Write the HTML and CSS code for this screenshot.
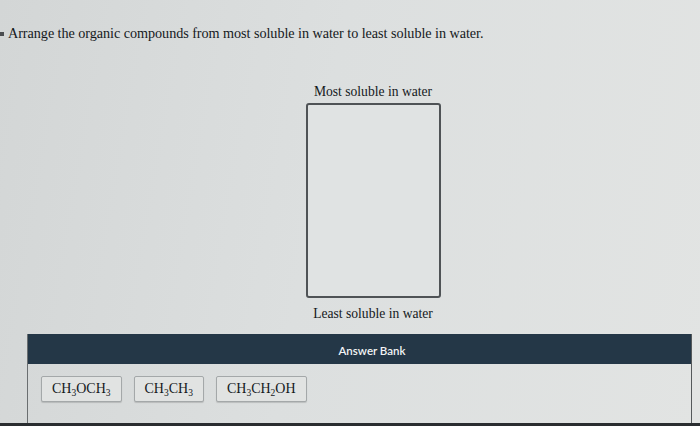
FILE: index.html
```html
<!DOCTYPE html>
<html lang="en">
<head>
    <meta charset="UTF-8">
    <meta name="viewport" content="width=device-width, initial-scale=1.0">
    <title>Solubility Ranking</title>
    <link rel="stylesheet" href="styles.css">
</head>
<body>
    <div class="question">
        <span class="marker"></span>
        <p class="prompt">Arrange the organic compounds from most soluble in water to least soluble in water.</p>
    </div>

    <div class="ranking">
        <div class="rank-label">Most soluble in water</div>
        <div class="drop-zone"></div>
        <div class="rank-label">Least soluble in water</div>
    </div>

    <div class="answer-bank">
        <div class="bank-header">Answer Bank</div>
        <div class="bank-items">
            <div class="tile">CH<sub>3</sub>OCH<sub>3</sub></div>
            <div class="tile">CH<sub>3</sub>CH<sub>3</sub></div>
            <div class="tile">CH<sub>3</sub>CH<sub>2</sub>OH</div>
        </div>
    </div>
    <div class="screen-edge"></div>
</body>
</html>
```

FILE: styles.css
```css
* {
    margin: 0;
    padding: 0;
    box-sizing: border-box;
}

html, body {
    height: 100%;
}

body {
    font-family: 'Liberation Serif', 'Times New Roman', serif;
    background: linear-gradient(100deg, #d3d6d6 0%, #dcdfdf 45%, #e2e4e3 100%);
    color: #15191c;
    display: flex;
    flex-direction: column;
    overflow: hidden;
}

.question {
    display: flex;
    align-items: center;
    padding: 22px 0 0 0;
    height: 44px;
}

.marker {
    width: 4px;
    height: 4px;
    background: #4a4d50;
    margin-right: 4px;
    margin-top: 2px;
}

.prompt {
    font-size: 14.2px;
    letter-spacing: -0.05px;
}

.ranking {
    display: flex;
    flex-direction: column;
    align-items: center;
    margin: 39px 0 0 304px;
    width: 138px;
}

.rank-label {
    font-size: 13.6px;
    line-height: 17px;
    white-space: nowrap;
}

.drop-zone {
    width: 135px;
    height: 195px;
    margin: 3px 0 7px;
    border: 2px solid #4f5356;
    border-radius: 3px;
    background: #e0e3e3;
}

.answer-bank {
    margin: 12px 8px 0 27px;
    flex: 1;
    display: flex;
    flex-direction: column;
    border-left: 1px solid #6a6e70;
    border-right: 1px solid #55595b;
}

.bank-header {
    background: #243747;
    color: #f2f4f5;
    font-family: 'Lato', 'Liberation Sans', sans-serif;
    font-weight: 600;
    font-size: 11.5px;
    text-align: center;
    height: 30px;
    line-height: 34px;
    padding-left: 25px;
}

.bank-items {
    display: flex;
    gap: 12px;
    padding: 12px 0 0 13px;
}

.tile {
    font-size: 14px;
    padding: 4px 10px 5px;
    background: #e1e3e2;
    border: 1px solid #a4a8a9;
    border-radius: 2px;
    box-shadow: 0 1px 1px rgba(0, 0, 0, 0.15);
    height: 26px;
    white-space: nowrap;
}

.tile sub {
    font-size: 9.5px;
    vertical-align: -3px;
    line-height: 0;
}

.screen-edge {
    height: 3px;
    background: #2a2d30;
}
```
